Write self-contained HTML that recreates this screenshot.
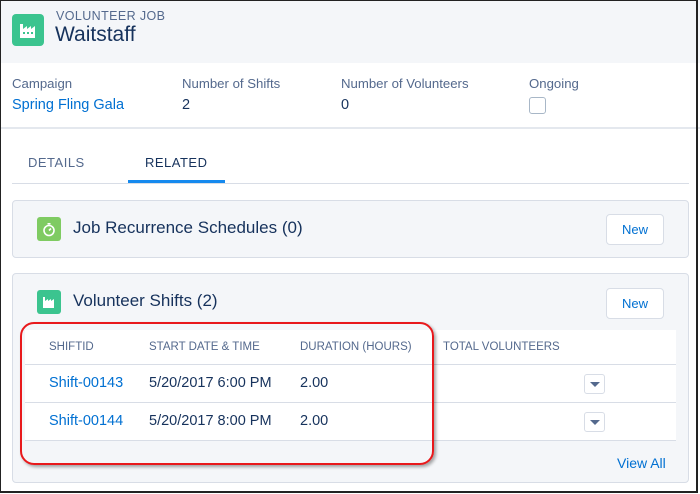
<!DOCTYPE html>
<html><head><style>
*{box-sizing:border-box;margin:0;padding:0}
body{width:700px;height:494px;overflow:hidden;background:#fff;font-family:"Liberation Sans",sans-serif;color:#16325c;position:relative}
.frame{position:absolute;left:0;top:0;width:698px;height:493px;border:1px solid #222;border-right:2px solid #222;border-bottom:2px solid #222}
.abs{position:absolute}
.lbl{font-size:13.2px;color:#54698d}
.val{font-size:14.5px;color:#16325c}
a{color:#0070d2;text-decoration:none}
.card{position:absolute;left:12px;width:677px;background:#f4f6f9;border:1px solid #d8dde6;border-radius:4px}
.btn{position:absolute;width:58px;height:31px;border:1px solid #d8dde6;border-radius:4px;background:#fff;color:#0070d2;font-size:13px;text-align:center;line-height:29px}
.th{position:absolute;top:341px;font-size:11.5px;color:#54698d}
.td{position:absolute;font-size:14.5px}
.dd{position:absolute;left:584px;width:21px;height:20px;border:1px solid #d8dde6;border-radius:3px;background:#fff}
.dd:after{content:"";position:absolute;left:5px;top:7px;border-left:5px solid transparent;border-right:5px solid transparent;border-top:5px solid #54698d}
</style></head><body>
<div class="abs" style="left:0;top:0;width:700px;height:63px;background:#f4f6f9"></div>
<div class="abs" style="left:12px;top:14px;width:32px;height:32px;background:#3bc48f;border-radius:4px">
<svg width="32" height="32" viewBox="0 0 32 32"><path d="M8 24V10h3v5l4-3v3l4-3v3l4-3v12z" fill="#fff"/><rect x="11" y="18" width="2" height="2" fill="#3bc48f"/><rect x="15" y="18" width="2" height="2" fill="#3bc48f"/><rect x="19" y="18" width="2" height="2" fill="#3bc48f"/></svg></div>
<div class="abs" style="left:56px;top:9px;font-size:12.5px;color:#54698d;letter-spacing:.4px">VOLUNTEER JOB</div>
<div class="abs" style="left:55px;top:23px;font-size:21px;color:#16325c">Waitstaff</div>
<div class="abs lbl" style="left:12px;top:76px">Campaign</div>
<div class="abs val" style="left:12px;top:97px"><a>Spring Fling Gala</a></div>
<div class="abs lbl" style="left:182px;top:76px">Number of Shifts</div>
<div class="abs val" style="left:182px;top:97px">2</div>
<div class="abs lbl" style="left:341px;top:76px">Number of Volunteers</div>
<div class="abs val" style="left:341px;top:97px">0</div>
<div class="abs lbl" style="left:529px;top:76px">Ongoing</div>
<div class="abs" style="left:529px;top:97px;width:17px;height:17px;border:1px solid #a8b7c7;border-radius:3px;background:#fff"></div>
<div class="abs" style="left:0;top:127px;width:700px;height:2px;background:#e4e8ee"></div>
<div class="abs" style="left:28px;top:155px;font-size:13px;color:#54698d;letter-spacing:.5px">DETAILS</div>
<div class="abs" style="left:145px;top:155px;font-size:13px;color:#16325c;letter-spacing:.5px">RELATED</div>
<div class="abs" style="left:128px;top:180px;width:97px;height:3px;background:#1589ee"></div>
<div class="abs" style="left:12px;top:183px;width:677px;height:1px;background:#d8dde6"></div>
<div class="card" style="top:200px;height:58px"></div>
<div class="abs" style="left:37px;top:217px;width:24px;height:24px;background:#7fcb62;border-radius:3px">
<svg width="24" height="24" viewBox="0 0 24 24"><circle cx="12" cy="13.5" r="5" fill="none" stroke="#fff" stroke-width="1.6"/><rect x="10.5" y="6" width="3" height="1.6" fill="#fff"/><path d="M12 13.5l2-2" stroke="#fff" stroke-width="1.6"/></svg></div>
<div class="abs" style="left:73px;top:218px;font-size:17px">Job Recurrence Schedules (0)</div>
<div class="btn" style="left:606px;top:214px">New</div>
<div class="card" style="top:273px;height:210px"></div>
<div class="abs" style="left:37px;top:290px;width:24px;height:24px;background:#3bc48f;border-radius:3px">
<svg width="24" height="24" viewBox="0 0 24 24"><path d="M6 18V7h2v4l3-2v2l3-2v2l3-2v9z" fill="#fff"/></svg></div>
<div class="abs" style="left:73px;top:291px;font-size:17px">Volunteer Shifts (2)</div>
<div class="btn" style="left:606px;top:288px">New</div>
<div class="abs" style="left:25px;top:330px;width:651px;height:110px;background:#fff"></div>
<div class="abs" style="left:25px;top:364px;width:651px;height:1px;background:#d8dde6"></div>
<div class="abs" style="left:25px;top:402px;width:651px;height:1px;background:#d8dde6"></div>
<div class="abs" style="left:25px;top:440px;width:651px;height:1px;background:#d8dde6"></div>
<div class="th" style="left:49px">SHIFTID</div>
<div class="th" style="left:149px">START DATE &amp; TIME</div>
<div class="th" style="left:300px">DURATION (HOURS)</div>
<div class="th" style="left:443px">TOTAL VOLUNTEERS</div>
<div class="td" style="left:49px;top:375px"><a>Shift-00143</a></div>
<div class="td" style="left:149px;top:375px">5/20/2017 6:00 PM</div>
<div class="td" style="left:300px;top:375px">2.00</div>
<div class="dd" style="top:374px"></div>
<div class="td" style="left:49px;top:413px"><a>Shift-00144</a></div>
<div class="td" style="left:149px;top:413px">5/20/2017 8:00 PM</div>
<div class="td" style="left:300px;top:413px">2.00</div>
<div class="dd" style="top:412px"></div>
<div class="abs" style="left:617px;top:455px;font-size:14px"><a>View All</a></div>
<div class="abs" style="left:20px;top:322px;width:414px;height:143px;border:2px solid #e8191c;border-radius:14px;box-shadow:2px 2px 3px rgba(0,0,0,.35)"></div>
<div class="frame"></div>
</body></html>
